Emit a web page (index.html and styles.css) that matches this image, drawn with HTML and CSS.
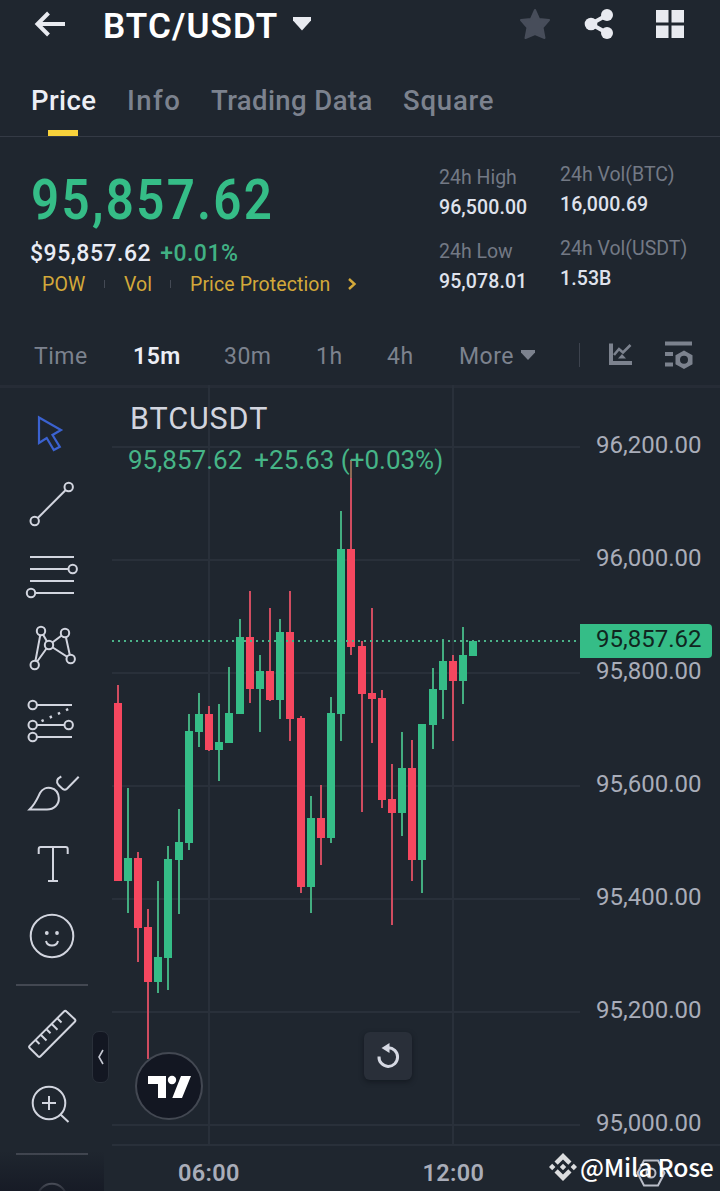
FILE: index.html
```html
<!DOCTYPE html>
<html lang="en">
<head>
<meta charset="utf-8">
<title>BTC/USDT</title>
<link rel="stylesheet" href="styles.css">
</head>
<body>
<div class="app">
  <header class="topbar">
    <svg class="back" width="32" height="26" viewBox="0 0 32 26"><path d="M14.500 2 L3.500 13 L14.500 24 M4 13 H31" fill="none" stroke="#e8eaf0" stroke-width="4"/></svg>
    <h1 class="pair">BTC/USDT</h1>
    <svg class="caret" width="20" height="16" viewBox="0 0 20 16"><path d="M1 1 H19 V4.500 L10 14.500 L1 4.500Z" fill="#e8eaf0"/></svg>
    <svg class="star" width="32" height="32" viewBox="0 0 32 32"><path d="M16 2 L20 11 L30 12 L23.500 19.500 L25.500 30 L16 26 L6.500 30 L8.500 19.500 L2 12 L12 11Z" fill="#474d5a" stroke="#474d5a" stroke-width="2" stroke-linejoin="round"/></svg>
    <svg class="share" width="32" height="32" viewBox="0 0 32 32"><path d="M24 7 L8 16 L24 25" fill="none" stroke="#e8eaf0" stroke-width="4"/><circle cx="8" cy="16" r="6.300" fill="#e8eaf0"/><circle cx="24" cy="7" r="6" fill="#e8eaf0"/><circle cx="24" cy="25" r="6" fill="#e8eaf0"/></svg>
    <svg class="apps" width="28" height="28" viewBox="0 0 28 28"><path d="M0 0H12.500V12.500H0Z M15.500 0H28V12.500H15.500Z M0 15.500H12.500V28H0Z M15.500 15.500H28V28H15.500Z" fill="#e8eaf0"/></svg>
  </header>

  <nav class="tabs">
    <span class="tab active">Price</span>
    <span class="tab tab-info">Info</span>
    <span class="tab">Trading Data</span>
    <span class="tab tab-square">Square</span>
  </nav>

  <section class="summary">
    <div class="quote">
      <div class="last">95,857.62</div>
      <div class="fiat"><span class="usd">$95,857.62</span><span class="change">+0.01%</span></div>
      <div class="tags"><span class="tag-pow">POW</span><i></i><span class="tag-vol">Vol</span><i></i><span class="tag-protect">Price Protection</span>
        <svg width="10" height="14" viewBox="0 0 10 14"><path d="M2 2 L7.500 7 L2 12" fill="none" stroke="#d3a93a" stroke-width="2.400"/></svg>
      </div>
    </div>
    <dl class="stats stats-range">
      <dt>24h High</dt><dd>96,500.00</dd>
      <dt>24h Low</dt><dd>95,078.01</dd>
    </dl>
    <dl class="stats stats-volume">
      <dt>24h Vol(BTC)</dt><dd>16,000.69</dd>
      <dt>24h Vol(USDT)</dt><dd>1.53B</dd>
    </dl>
  </section>

  <div class="intervals">
    <span>Time</span><span class="selected">15m</span><span>30m</span><span>1h</span><span>4h</span><span class="more">More</span>
    <svg class="more-caret" width="14" height="12" viewBox="0 0 14 12"><path d="M0 1H14V3.500L7 11L0 3.500Z" fill="#7c828e"/></svg>
    <i class="divider"></i>
    <svg class="chart-type" width="24" height="24" viewBox="0 0 24 24"><path d="M2 1.500V21H23" fill="none" stroke="#7c828e" stroke-width="4"/><path d="M5 13 L10 7 L14 10.500 L21.500 3" fill="none" stroke="#7c828e" stroke-width="2.600"/><path d="M9 16.500 L13 12 L17 16.500Z" fill="#7c828e"/></svg>
    <svg class="chart-settings" width="30" height="28" viewBox="0 0 30 28"><path d="M1 2.500H28 M1 13H9 M1 23.500H9" fill="none" stroke="#7c828e" stroke-width="4.200"/><path fill-rule="evenodd" d="M20 9.500 L28.500 14.300 V23.300 L20 28 L11.500 23.300 V14.300Z M20 14.800 A4 4 0 1 0 20 22.800 A4 4 0 1 0 20 14.800Z" fill="#7c828e"/></svg>
  </div>

  <main class="workspace">
    <aside class="tools">
      <svg class="tool" viewBox="0 0 72 72"><path d="M23 20.500 L45 33 L36.500 38 L43.800 49.800 L37.800 53 L30.700 41 L23 46Z" fill="none" stroke="#3b62d0" stroke-width="2.200"/></svg>
      <svg class="tool" viewBox="0 0 72 72"><path d="M21.800 49 L49.700 21"/><circle cx="52.700" cy="18" r="4.200"/><circle cx="18.700" cy="52" r="4.200"/></svg>
      <svg class="tool" viewBox="0 0 72 72"><path d="M14 16H58 M14 28H52.500 M14 40H58 M19 52H58"/><circle cx="56.700" cy="28" r="4.200"/><circle cx="15" cy="52" r="4.200"/></svg>
      <svg class="tool" viewBox="0 0 72 72"><path d="M25 18 L33 32 L49 20 L54.700 46 L33 32 L18.700 52Z"/><circle class="node" cx="25" cy="18" r="4.200"/><circle class="node" cx="49" cy="20" r="4.200"/><circle class="node" cx="33" cy="32" r="4.200"/><circle class="node" cx="18.700" cy="52" r="4.200"/><circle class="node" cx="54.700" cy="46" r="4.200"/></svg>
      <svg class="tool" viewBox="0 0 72 72"><path d="M21 20H56 M21 40H48.500 M21 52H56"/><circle cx="16.700" cy="20" r="4.200"/><circle cx="16.700" cy="40" r="4.200"/><circle cx="52.700" cy="40" r="4.200"/><circle cx="16.700" cy="52" r="4.200"/><path class="dots" d="M25.500 36.200l2.200-1 M33.700 32.500l2.200-1 M41.900 28.800l2.200-1 M50 25.100l2.200-1"/></svg>
      <svg class="tool" viewBox="0 0 72 72"><path d="M13.500 52.500 C20 46 21.500 41 24 36 C28.500 27.500 42 29.500 42.800 41 C43.200 47.500 38 52.500 31 52.500Z M45.300 19.500 Q38.500 23 42.500 28 L47 32.200 Q49 33.500 51 31.800 L62.700 19.700"/></svg>
      <svg class="tool" viewBox="0 0 72 72"><path d="M22.700 25 V20 Q22.700 18 24.700 18 H49.700 Q51.700 18 51.700 20 V25 M37 18V52 M32 52H42"/></svg>
      <svg class="tool" viewBox="0 0 72 72"><circle cx="36" cy="35" r="21.300"/><circle class="eye" cx="30.800" cy="32" r="1.900"/><circle class="eye" cx="41" cy="32" r="1.900"/><path d="M30 40 C31.500 46 40.500 46 42 40"/></svg>
      <hr class="tool-rule">
      <svg class="tool" viewBox="0 0 72 72"><path d="M50.500 13.500 L58.800 21.300 Q60 22.500 58.800 23.700 L24.500 58.300 Q23.300 59.500 22 58.300 L13.700 50 Q12.500 48.800 13.700 47.600 L48 13.500 Q49.300 12.300 50.500 13.500Z M20 42.500 L23.500 46 M25.200 37.200 L30.500 42.500 M30.800 31.500 L34.500 35.200 M36 26.200 L41.500 31.700 M41.500 20.500 L45.500 24.500"/></svg>
      <svg class="tool" viewBox="0 0 72 72"><circle cx="33" cy="33" r="16.300"/><path d="M44.500 44.500 L52.500 52 M26 33H40 M33 26V40"/></svg>
      <hr class="tool-rule">
      <svg class="tool" viewBox="0 0 72 72"><circle cx="36" cy="31" r="14.300"/></svg>
      <div class="fade"></div>
    </aside>

    <div class="chart">
      <svg class="plot" width="616" height="806" viewBox="104 385 616 806">
        <path class="grid" d="M112 447H580 M112 560H580 M112 673H580 M112 786H580 M112 899H580 M112 1012H580 M112 1125H580 M112 1145H720 M209 385V1144 M453 385V1144"/>
        <path class="wick up" d="M128 788V913 M158 881V993 M168 846V990 M179 809V914 M189 714V850 M199 693V747 M219 704V781 M229 667V743 M240 619V714 M260 655V732 M280 619V719 M311 796V913 M331 697V843 M341 511V741 M402 732V836 M422 724V893 M433 668V749 M443 639V719 M463 627V704"/>
        <path class="wick down" d="M118 685V881 M138 852V962 M148 909V1059 M209 706V751 M250 591V703 M270 608V701 M290 591V741 M301 716V893 M321 785V865 M351 478V655 M362 641V812 M372 608V743 M382 690V808 M392 764V925 M412 740V881 M453 655V741"/>
        <path class="wick down faint" d="M351 460V478"/>
        <path class="body up" d="M128 858V881 M158 957V982 M168 859V958 M179 842V860 M189 731V843 M199 714V732 M219 742V750 M229 713V743 M240 637V714 M260 671V689 M280 632V700 M311 818V887 M331 713V838 M341 549V714 M402 768V813 M422 724V860 M433 689V725 M443 661V690 M463 655V681 M473 641V656"/>
        <path class="body down" d="M118 703V881 M138 858V928 M148 927V982 M209 714V750 M250 637V689 M270 671V700 M290 632V719 M301 718V887 M321 818V838 M351 549V647 M362 646V694 M372 693V699 M382 698V800 M392 799V813 M412 768V860 M453 661V681"/>
        <path class="last-line" d="M112 641H580"/>
      </svg>
      <div class="legend">
        <div class="symbol">BTCUSDT</div>
        <div class="values"><span>95,857.62</span><span>+25.63 (+0.03%)</span></div>
      </div>
      <div class="price-axis">
        <span>96,200.00</span><span>96,000.00</span><span>95,800.00</span><span>95,600.00</span><span>95,400.00</span><span>95,200.00</span><span>95,000.00</span>
      </div>
      <div class="price-tag">95,857.62</div>
      <div class="time-axis"><span>06:00</span><span>12:00</span></div>
      <svg class="axis-gear" width="30" height="28" viewBox="0 0 30 28"><path d="M8 1.500H22L28.500 14L22 26.500H8L1.500 14Z" fill="none" stroke="#b9bdc8" stroke-width="2"/><circle cx="15" cy="14" r="4.500" fill="none" stroke="#b9bdc8" stroke-width="2"/></svg>
      <div class="tv-badge"><svg width="44" height="24" viewBox="0 0 44 24"><path d="M0 1H18V23H10V9H0Z M33 1H43L34 23H24.300Z" fill="#fff"/><circle cx="24" cy="5" r="4.200" fill="#fff"/></svg></div>
      <div class="reset"><svg width="24" height="28" viewBox="0 0 24 28"><path d="M3 14.500 A9.300 9.300 0 1 0 12 5.800" fill="none" stroke="#d5d8e2" stroke-width="3"/><path d="M5.500 6 L13.500 1 V11Z" fill="#d5d8e2"/></svg></div>
      <div class="collapse"><svg width="8" height="16" viewBox="0 0 8 16"><path d="M6 1 L2 8 L6 15" fill="none" stroke="#c5c8d2" stroke-width="1.600"/></svg></div>
      <div class="watermark">
        <svg width="28" height="28" viewBox="0 0 28 28"><path d="M14 0 L22.500 8.500 L19.300 11.700 L14 6.400 L8.700 11.700 L5.500 8.500Z M14 28 L22.500 19.500 L19.300 16.300 L14 21.600 L8.700 16.300 L5.500 19.500Z M3.200 10.800 L6.400 14 L3.200 17.200 L0 14Z M24.800 10.800 L28 14 L24.800 17.200 L21.600 14Z M14 10.800 L17.200 14 L14 17.200 L10.800 14Z" fill="#dcdddf"/></svg>
        <span>@Mila Rose</span>
      </div>
    </div>
  </main>
</div>
</body>
</html>
```
FILE: styles.css
```css
* { box-sizing: border-box; }
body { margin: 0; background: #1f262f; font-family: Roboto, "Liberation Sans", sans-serif; }
svg { display: block; flex: none; }
.app { width: 720px; height: 1191px; overflow: hidden; background: #1f262f; white-space: nowrap; }

.topbar { display: flex; align-items: center; height: 48px; padding-left: 34px; }
.pair { margin: 5px 0 0 37px; width: 189px; font-size: 35px; line-height: 42px; font-weight: 600; letter-spacing: 1.1px; color: #fff; }
.star { margin-left: 207px; }
.share { margin-left: 32px; }
.apps { margin-left: 41px; }

.tabs { display: grid; grid-template-columns: 96px 84px 192px auto; height: 89px; padding: 36px 0 0 31px; border-bottom: 1px solid #343a45; }
.tab { position: relative; font-size: 27.500px; line-height: 34px; font-weight: 500; letter-spacing: 0.4px; color: #7c828e; }
.tab-info { letter-spacing: 1.500px; }
.tab-square { letter-spacing: 0.8px; }
.tab.active { color: #eceef5; }
.tab.active::after { content: ""; position: absolute; left: 17px; top: 46px; width: 30px; height: 6px; background: #f8d23b; }

.summary { display: grid; grid-template-columns: 408px 121px auto; height: 187px; padding-left: 31px; }
.quote { padding-top: 32px; }
.last { width: 280px; font-size: 56px; line-height: 62px; font-weight: 600; letter-spacing: 2.600px; color: #35bd87; transform: scaleX(0.88); transform-origin: left; }
.fiat { display: flex; gap: 9px; margin: 9px 0 -1px -1px; font-size: 23px; line-height: 28px; font-weight: 500; letter-spacing: 0.5px; color: #e9ecf5; }
.fiat .change { color: #41b184; }
.tags { display: flex; align-items: center; height: 34px; padding-left: 11px; font-size: 19.500px; letter-spacing: 0.1px; color: #d3a93a; }
.tags i { width: 1px; height: 8px; background: #444a55; }
.tag-pow { width: 62px; }
.tag-vol { width: 46px; margin-left: 19px; }
.tag-protect { width: 157px; margin-left: 19px; }
.stats { margin: 0; font-size: 19.500px; line-height: 24px; }
.stats-range { padding-top: 29px; }
.stats-volume { padding-top: 26px; }
.stats dt { height: 29px; color: #737985; }
.stats dd { height: 45px; margin: 0; padding-top: 1px; font-weight: 500; letter-spacing: 0.1px; color: #dfe2ec; }

.intervals { display: grid; grid-template-columns: 99px 91px 92px 71px 72px 62px 58px 30px 55px auto; align-items: center; height: 61px; padding-left: 34px; font-size: 23px; letter-spacing: 0.500px; color: #7c828e; }
.intervals span { padding-top: 4px; }
.intervals .selected { font-weight: 600; color: #eceef5; }
.intervals .divider { width: 1px; height: 24px; background: #3d434e; }
.chart-type { margin-top: -2px; }

.workspace { display: grid; grid-template-columns: 104px 616px; height: 806px; box-shadow: inset 0 3px #262c36; }
.tools { position: relative; display: flex; flex-direction: column; padding: 12px 0 0 16px; height: 806px; overflow: hidden; }
.tool { width: 72px; height: 72px; fill: none; stroke: #d2d5df; stroke-width: 2; }
.tool .node { fill: #1f262f; }
.tool .eye { fill: #d2d5df; stroke: none; }
.tool .dots { stroke-width: 2.500; }
.tool-rule { flex: none; width: 72px; height: 2px; margin: 11px 0 12px; border: 0; background: #434852; }
.fade { position: absolute; left: 0; bottom: 0; width: 104px; height: 40px; background: linear-gradient(rgba(22, 26, 37, 0), rgba(22, 26, 37, 0.900)); }

.chart { position: relative; height: 806px; }
.plot { position: absolute; left: 0; top: 0; fill: none; }
.grid { stroke: #29303a; stroke-width: 2; }
.wick { stroke-width: 2; }
.body { stroke-width: 8; }
.up { stroke: #35bd87; }
.down { stroke: #f6475f; }
.wick.up { stroke: #43ad80; }
.wick.down { stroke: #d04c60; }
.wick.faint { stroke: #8d6a55; }
.last-line { stroke: #4bb389; stroke-width: 2; stroke-dasharray: 2 4; }
.legend { position: absolute; left: 24px; top: 15px; }
.symbol { padding-left: 2px; font-size: 30.500px; line-height: 38px; letter-spacing: 0.9px; color: #d2d5df; }
.values { display: flex; gap: 12px; margin-top: 5px; font-size: 26px; line-height: 34px; color: #46b587; }
.price-axis { position: absolute; left: 492px; top: 3px; display: grid; grid-auto-rows: 113px; align-items: center; font-size: 24px; color: #a9adb9; }
.price-tag { position: absolute; left: 476px; top: 239px; width: 132px; height: 34px; padding-left: 16px; border-radius: 0 4px 4px 0; background: #35bd87; font-size: 24px; line-height: 31px; color: #10261f; }
.time-axis { position: absolute; left: 74px; top: 774px; display: flex; gap: 183px; font-size: 23.500px; line-height: 28px; font-weight: 600; letter-spacing: 0.3px; color: #a9adb9; }
.axis-gear { position: absolute; left: 532px; top: 774px; }
.tv-badge { position: absolute; left: 31px; top: 667px; width: 68px; height: 68px; display: flex; align-items: center; justify-content: center; padding: 1px 0 0 1px; border: 2px solid #434852; border-radius: 50%; background: #131722; }
.reset { position: absolute; left: 260px; top: 647px; width: 48px; height: 48px; display: flex; align-items: center; justify-content: center; border-radius: 6px; background: #292f39; box-shadow: 0 2px 5px rgba(10, 13, 20, 0.500); }
.collapse { position: absolute; left: -12px; top: 646px; width: 17px; height: 52px; display: flex; align-items: center; justify-content: center; border: 1px solid #2a303a; border-radius: 7px; background: #131722; }
.watermark { position: absolute; left: 445px; top: 765px; display: flex; align-items: center; gap: 3px; height: 34px; font-family: "Noto Sans CJK SC", "Noto Sans", sans-serif; font-size: 24.700px; line-height: 34px; font-weight: 500; letter-spacing: -0.2px; color: #fff; }
.watermark span { margin-top: -3px; }
```
